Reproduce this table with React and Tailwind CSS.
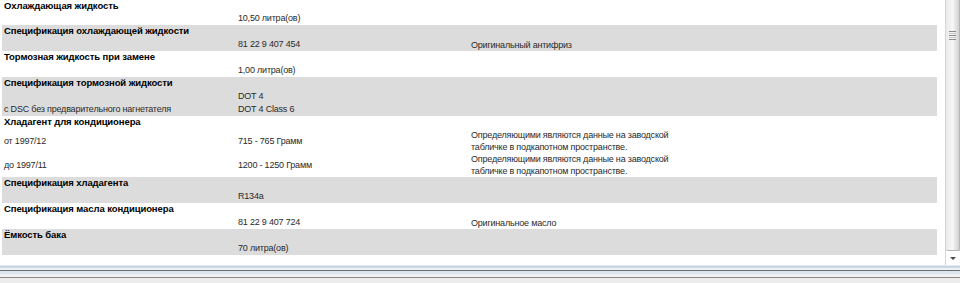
import React from "react";

const groups = [
  {
    title: "Охлаждающая жидкость",
    gray: false,
    first: true,
    rows: [{ label: "", value: "10,50 литра(ов)", note: [] }],
  },
  {
    title: "Спецификация охлаждающей жидкости",
    gray: true,
    rows: [{ label: "", value: "81 22 9 407 454", note: ["Оригинальный антифриз"] }],
  },
  {
    title: "Тормозная жидкость при замене",
    gray: false,
    rows: [{ label: "", value: "1,00 литра(ов)", note: [] }],
  },
  {
    title: "Спецификация тормозной жидкости",
    gray: true,
    rows: [
      { label: "", value: "DOT 4", note: [] },
      { label: "с DSC без предварительного нагнетателя", value: "DOT 4 Class 6", note: [] },
    ],
  },
  {
    title: "Хладагент для кондиционера",
    gray: false,
    rows: [
      {
        label: "от 1997/12",
        value: "715 - 765 Грамм",
        note: ["Определяющими являются данные на заводской", "табличке в подкапотном пространстве."],
      },
      {
        label: "до 1997/11",
        value: "1200 - 1250 Грамм",
        note: ["Определяющими являются данные на заводской", "табличке в подкапотном пространстве."],
      },
    ],
  },
  {
    title: "Спецификация хладагента",
    gray: true,
    rows: [{ label: "", value: "R134a", note: [] }],
  },
  {
    title: "Спецификация масла кондиционера",
    gray: false,
    rows: [{ label: "", value: "81 22 9 407 724", note: ["Оригинальное масло"] }],
  },
  {
    title: "Ёмкость бака",
    gray: true,
    rows: [{ label: "", value: "70 литра(ов)", note: [] }],
  },
];

function Row({ row }) {
  const tall = row.note.length > 1;
  return (
    <div className={`flex items-center ${tall ? "h-[24px]" : "h-[13px]"}`}>
      <div className="w-[234px] shrink-0 leading-[13px]">{row.label}</div>
      <div className="w-[233px] shrink-0 leading-[13px]">{row.value}</div>
      <div className="leading-[12px]">
        {row.note.map((n) => (
          <div key={n}>{n}</div>
        ))}
      </div>
    </div>
  );
}

function Group({ group }) {
  return (
    <div className={`px-[2px] ${group.gray ? "bg-[#dcdcdc]" : ""}`}>
      <div
        className={`flex items-center font-bold text-[9.5px] tracking-[-0.1px] text-black ${
          group.first ? "h-[12px]" : "h-[13px]"
        }`}
      >
        {group.title}
      </div>
      <div className="text-[9px] tracking-[-0.2px] text-[#2a2a2a]">
        {group.rows.map((r, i) => (
          <Row key={i} row={r} />
        ))}
      </div>
    </div>
  );
}

function Scrollbar() {
  return (
    <div className="w-[15px] h-full flex flex-col border-l border-[#d6d6d6] bg-[#f2f2f2]">
      {/* thumb */}
      <div className="h-[251px] border-r border-b border-[#b5b5b5] rounded-b-[2px] bg-gradient-to-r from-[#eaeaea] via-[#f7f7f7] to-[#d2d2d2] flex flex-col items-center">
        <div className="mt-[31px] flex flex-col gap-[1px] w-[7px]">
          <div className="h-[1px] bg-[#8c8c8c]" />
          <div className="h-[1px] bg-[#c8c8c8]" />
          <div className="h-[1px] bg-[#8c8c8c]" />
          <div className="h-[1px] bg-[#c8c8c8]" />
          <div className="h-[1px] bg-[#8c8c8c]" />
        </div>
      </div>
      {/* down arrow */}
      <div className="flex-1 flex items-center justify-center bg-white">
        <div className="w-0 h-0 border-l-[3px] border-r-[3px] border-t-[3px] border-l-transparent border-r-transparent border-t-[#4a4a4a]" />
      </div>
    </div>
  );
}

export default function App() {
  return (
    <div
      className="w-[960px] h-[283px] bg-white overflow-hidden flex flex-col"
      style={{ fontFamily: '"Liberation Sans", Arial, sans-serif' }}
    >
      <div className="h-[265px] flex">
        <div className="flex-1 pl-[2px] pr-[8px]">
          {groups.map((g) => (
            <Group key={g.title} group={g} />
          ))}
        </div>
        <Scrollbar />
      </div>
      {/* bottom frame */}
      <div className="h-[1px] bg-[#e3e8ef]" />
      <div className="h-[2px] bg-[#c9d6e6]" />
      <div className="h-[2px] bg-[#eef1f5]" />
      <div className="h-[1px] bg-[#6d6d6d]" />
      <div className="h-[3px] bg-[#dbe4ef]" />
      <div className="h-[3px] bg-[#f0f0f0]" />
      <div className="h-[1px] bg-[#8a8a8a]" />
      <div className="flex-1 bg-[#ececec]" />
    </div>
  );
}
